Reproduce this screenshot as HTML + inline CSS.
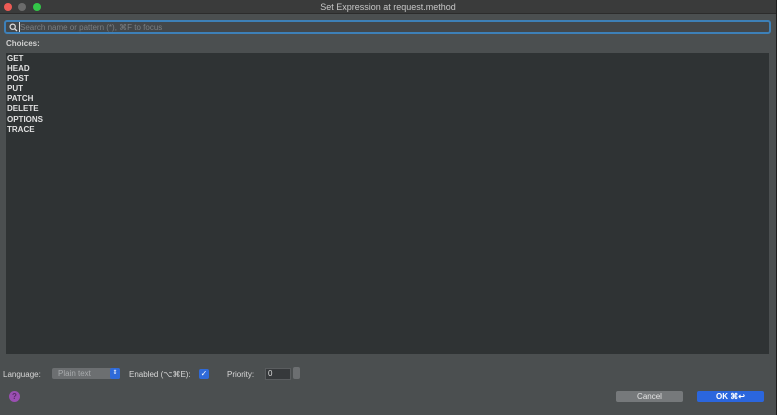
<!DOCTYPE html>
<html><head><style>
*{margin:0;padding:0;box-sizing:border-box}
body{width:777px;height:415px;background:#1e1e1e;font-family:"Liberation Sans",sans-serif;overflow:hidden;position:relative}
#win{position:absolute;left:0;top:0;width:776px;height:415px;background:#4b4f50}
#tb{position:absolute;left:0;top:0;width:776px;height:14px;background:#3a3b3b;border-bottom:1px solid #2c2c2c;color:#c8c8c8;font-size:9px;text-align:center;line-height:14px}
.dot{position:absolute;top:3px;width:8px;height:8px;border-radius:50%}
#search{position:absolute;left:4px;top:20px;width:767px;height:14px;border:2px solid #3d80b8;border-radius:3px;background:#43474a}
#search span{position:absolute;left:14px;top:1px;font-size:8px;line-height:10px;color:#7b7f82}
#choices{position:absolute;left:6px;top:39px;font-size:8px;font-weight:bold;color:#d0d0d0}
#list{position:absolute;left:6px;top:53px;width:763px;height:301px;background:#2f3334;padding-top:1px}
#list div{font-size:8px;font-weight:bold;color:#e0e0e0;height:10.1px;line-height:10px;padding-left:1px}
.lbl{position:absolute;font-size:8px;color:#d8d8d8;top:370px}
</style></head><body>
<div id="win">
<div id="tb">Set Expression at request.method</div>
<div class="dot" style="left:4px;background:#ed5b55"></div>
<div class="dot" style="left:18px;background:#6b6b6b"></div>
<div class="dot" style="left:33px;background:#33c748"></div>
<div id="search">
<svg style="position:absolute;left:3px;top:1px" width="9" height="9" viewBox="0 0 9 9"><circle cx="3.7" cy="3.7" r="2.6" fill="none" stroke="#e0e0e0" stroke-width="1.2"/><line x1="5.6" y1="5.6" x2="8" y2="8" stroke="#e0e0e0" stroke-width="1.3"/></svg>
<div style="position:absolute;left:13px;top:0;width:1px;height:10px;background:#ddd"></div>
<span>Search name or pattern (*), ⌘F to focus</span></div>
<div id="choices">Choices:</div>
<div id="list">
<div>GET</div><div>HEAD</div><div>POST</div><div>PUT</div><div>PATCH</div><div>DELETE</div><div>OPTIONS</div><div>TRACE</div>
</div>
<div class="lbl" style="left:3px">Language:</div>
<div style="position:absolute;left:52px;top:368px;width:68px;height:11px;background:#6c6f71;border-radius:2px;font-size:8px;color:#a8abad;line-height:11px;padding-left:6px">Plain text</div>
<div style="position:absolute;left:110px;top:368px;width:10px;height:11px;background:#2f6ad8;border-radius:2px;color:#fff;font-size:6px;text-align:center;line-height:11px">⇕</div>
<div class="lbl" style="left:129px">Enabled (⌥⌘E):</div>
<div style="position:absolute;left:199px;top:369px;width:10px;height:10px;background:#2f6ad8;border-radius:2px;color:#fff;font-size:8px;text-align:center;line-height:10px">✓</div>
<div class="lbl" style="left:227px">Priority:</div>
<div style="position:absolute;left:265px;top:368px;width:26px;height:12px;background:#36393b;border:1px solid #5a5d5f;font-size:8px;color:#ddd;line-height:10px;padding-left:2px">0</div>
<div style="position:absolute;left:293px;top:367px;width:7px;height:12px;background:#6c6f71;border-radius:2px"></div>
<div style="position:absolute;left:9px;top:391px;width:11px;height:11px;border-radius:50%;background:#9a4fb2;color:#5a2a6a;font-size:8px;font-weight:bold;text-align:center;line-height:11px">?</div>
<div style="position:absolute;left:616px;top:391px;width:67px;height:11px;background:#76797b;border-radius:2px;font-size:8px;color:#e4e4e4;text-align:center;line-height:11px">Cancel</div>
<div style="position:absolute;left:697px;top:391px;width:67px;height:11px;background:#2b66dd;border-radius:2px;font-size:8px;color:#fff;text-align:center;line-height:11px;font-weight:bold">OK ⌘↩</div>
</div>
</body></html>
